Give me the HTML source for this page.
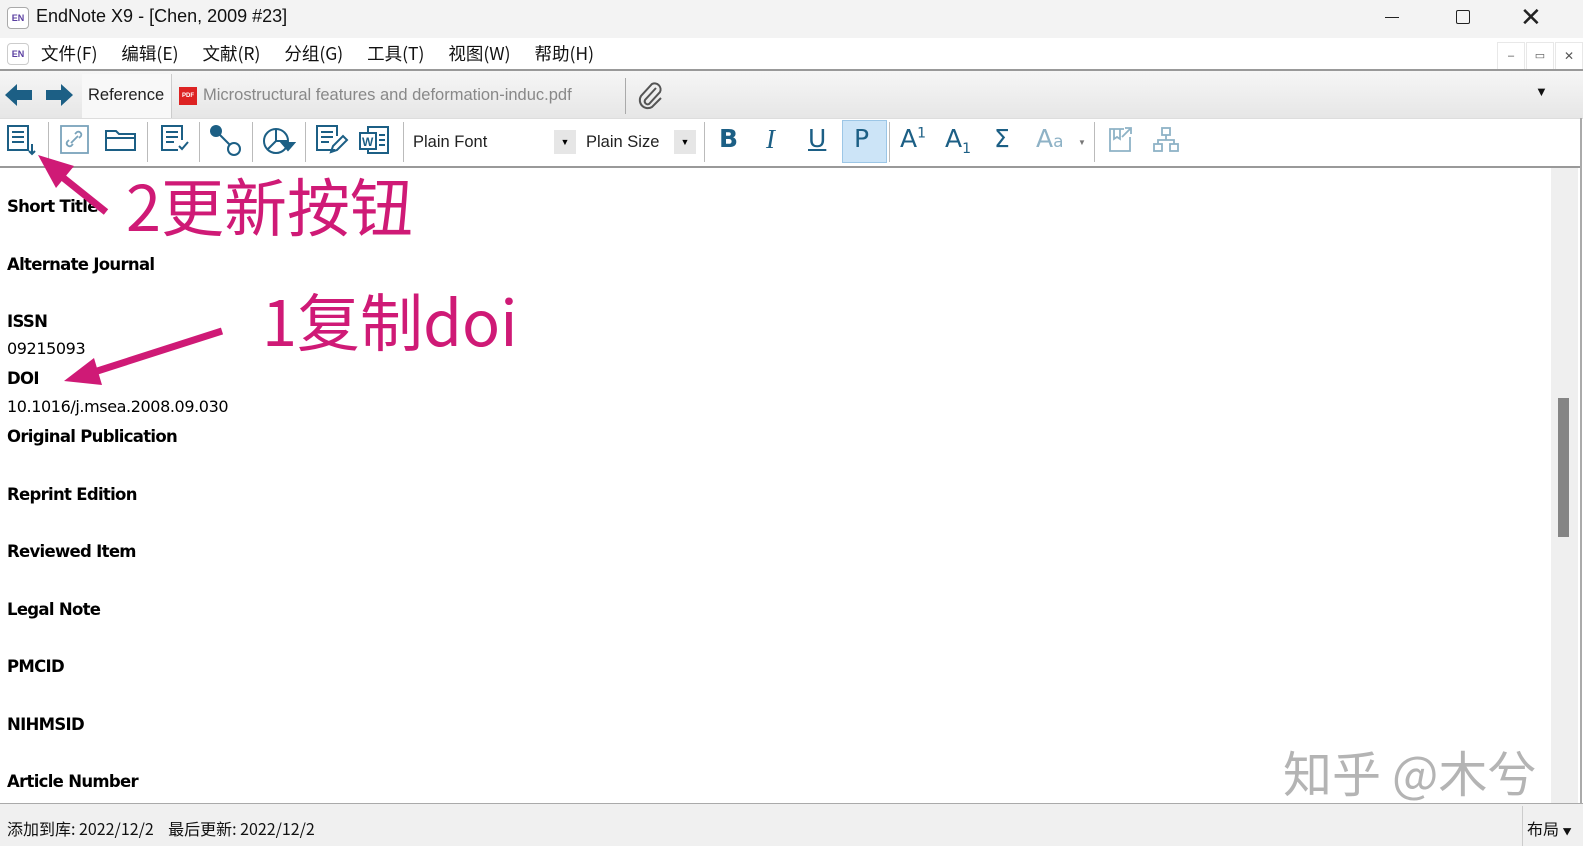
<!DOCTYPE html>
<html><head><meta charset="utf-8"><style>
*{margin:0;padding:0;box-sizing:border-box}
body{width:1583px;height:846px;overflow:hidden;background:#fff;font-family:"Liberation Sans","Noto Sans CJK SC",sans-serif;position:relative;color:#000}
.abs{position:absolute}
.cjk{font-family:"Noto Sans CJK SC","Liberation Sans",sans-serif}
.fl{position:absolute;left:7px;font-size:16.5px;font-weight:bold;font-family:"DejaVu Sans","Liberation Sans",sans-serif;letter-spacing:-0.7px}
.fv{position:absolute;left:7px;font-size:16px;font-family:"DejaVu Sans","Liberation Sans",sans-serif;letter-spacing:-0.4px}
.sep{position:absolute;top:122px;width:1px;height:40px;background:#bbb}
.tb{position:absolute;top:124px;font-size:25px;color:#1c5f85;font-family:"DejaVu Sans",sans-serif}
</style></head><body>
<!-- title bar -->
<div class="abs" style="left:0;top:0;width:1583px;height:38px;background:#f3f3f3"></div>
<div class="abs" style="left:7px;top:7px;width:22px;height:22px;border:1px solid #aaa;border-radius:4px;background:#fff;font-size:9px;font-weight:bold;color:#5a3ea0;text-align:center;line-height:20px">EN</div>
<div class="abs" style="left:36px;top:6px;font-size:18px;color:#111">EndNote X9 - [Chen, 2009 #23]</div>
<div class="abs" style="left:1385px;top:17px;width:14px;height:1px;background:#222"></div>
<div class="abs" style="left:1456px;top:10px;width:14px;height:14px;border:1.5px solid #222;border-radius:2px"></div>
<div class="abs" style="left:1520px;top:2px;font-size:26px;color:#222;font-weight:300">✕</div>
<!-- menu bar -->
<div class="abs" style="left:7px;top:43px;width:22px;height:22px;border:1px solid #ccc;border-radius:4px;background:#fff;font-size:9px;font-weight:bold;color:#5a3ea0;text-align:center;line-height:20px">EN</div>
<div class="abs cjk" style="left:41px;top:41px;font-size:17.5px;color:#111;word-spacing:20px">文件(F) 编辑(E) 文献(R) 分组(G) 工具(T) 视图(W) 帮助(H)</div>
<div class="abs" style="left:1497px;top:42px;width:28px;height:28px;border:1px solid #e8e8e8;font-size:11px;text-align:center;line-height:26px;color:#555">–</div>
<div class="abs" style="left:1526px;top:42px;width:28px;height:28px;border:1px solid #e8e8e8;font-size:11px;text-align:center;line-height:26px;color:#555">▭</div>
<div class="abs" style="left:1555px;top:42px;width:28px;height:28px;border:1px solid #e8e8e8;font-size:12px;text-align:center;line-height:26px;color:#555">✕</div>
<div class="abs" style="left:0;top:69px;width:1583px;height:2px;background:#999"></div>
<!-- tab bar -->
<div class="abs" style="left:0;top:71px;width:1583px;height:47px;background:linear-gradient(#f6f6f6,#e6e6e6)"></div>
<svg class="abs" style="left:4px;top:82px" width="70" height="26"><path d="M1 13 L13 2 V8 H28 V18 H13 V24 Z" fill="#1c5f85"/><path d="M69 13 L57 2 V8 H42 V18 H57 V24 Z" fill="#1c5f85"/></svg>
<div class="abs" style="left:82px;top:74px;width:90px;height:44px;background:#f8f8f8;border-right:1px solid #ccc"></div>
<div class="abs" style="left:88px;top:86px;font-size:16.5px;color:#222">Reference</div>
<div class="abs" style="left:179px;top:87px;width:18px;height:18px;background:#d22;color:#fff;font-size:6px;font-weight:bold;text-align:center;line-height:18px">PDF</div>
<div class="abs" style="left:203px;top:86px;font-size:16.5px;color:#888">Microstructural features and deformation-induc.pdf</div>
<div class="abs" style="left:625px;top:78px;width:1px;height:36px;background:#aaa"></div>
<svg class="abs" style="left:636px;top:80px" width="28" height="30" fill="none" stroke="#555" stroke-width="2"><path d="M20 8 L9 20 a3 3 0 0 0 4 4 L24 12 a6 6 0 0 0 -8 -8 L5 16 a8 8 0 0 0 11 11 L25 18"/></svg>
<div class="abs" style="left:1535px;top:84px;font-size:13px;color:#111">▼</div>
<div class="abs" style="left:0;top:118px;width:1583px;height:1px;background:#ddd"></div>
<!-- toolbar -->
<svg class="abs" style="left:6px;top:124px" width="32" height="34" fill="none" stroke="#1c5f85" stroke-width="2"><rect x="2" y="2" width="20" height="24"/><path d="M6 8h12M6 13h12M6 18h12"/><path d="M26 20v10M23 27l3 3 3-3"/></svg>
<div class="sep" style="left:48px"></div>
<svg class="abs" style="left:60px;top:125px" width="30" height="30" fill="none" stroke="#7aa3bb" stroke-width="1.8"><rect x="1" y="1" width="27" height="27"/><path d="M11 18l7-7M9 15l-2 2a3 3 0 004 4l2-2M19 13l2-2a3 3 0 00-4-4l-2 2"/></svg>
<svg class="abs" style="left:104px;top:127px" width="34" height="26" fill="none" stroke="#1c5f85" stroke-width="2"><path d="M2 4h10l3 3h16v16H2z M2 11h29"/></svg>
<div class="sep" style="left:147px"></div>
<svg class="abs" style="left:160px;top:124px" width="30" height="32" fill="none" stroke="#1c5f85" stroke-width="2"><path d="M18 26H2V2h20v14"/><path d="M6 8h12M6 13h12M6 18h8"/><path d="M19 22l3 3 6-7"/></svg>
<div class="sep" style="left:199px"></div>
<svg class="abs" style="left:208px;top:123px" width="36" height="34"><circle cx="8" cy="8" r="6" fill="#1c5f85"/><path d="M12 12l10 10" stroke="#1c5f85" stroke-width="2"/><circle cx="26" cy="26" r="6" fill="none" stroke="#1c5f85" stroke-width="2"/></svg>
<div class="sep" style="left:252px"></div>
<svg class="abs" style="left:262px;top:125px" width="34" height="32" fill="none" stroke="#1c5f85" stroke-width="2"><circle cx="14" cy="16" r="12"/><path d="M14 4v12h12M14 16l-8 8"/><path d="M20 18h12l-6 7z" fill="#1c5f85"/></svg>
<div class="sep" style="left:305px"></div>
<svg class="abs" style="left:315px;top:124px" width="34" height="32" fill="none" stroke="#1c5f85" stroke-width="2"><path d="M20 26H2V2h20v10"/><path d="M6 8h12M6 13h12M6 18h8"/><path d="M16 28l2-6 10-10 4 4-10 10z"/></svg>
<svg class="abs" style="left:358px;top:125px" width="34" height="32" fill="none" stroke="#1c5f85" stroke-width="2"><rect x="10" y="2" width="20" height="26"/><rect x="2" y="8" width="16" height="16" fill="#fff"/><text x="4" y="21" font-size="12" font-weight="bold" fill="#1c5f85" stroke="none" font-family="Liberation Sans">W</text><path d="M21 10h6M21 15h6M21 20h6"/></svg>
<div class="sep" style="left:403px"></div>
<div class="abs" style="left:413px;top:133px;font-size:16.5px;color:#222">Plain Font</div>
<div class="abs" style="left:554px;top:130px;width:22px;height:24px;background:#e6e6e6;font-size:9px;text-align:center;line-height:24px">▼</div>
<div class="abs" style="left:586px;top:133px;font-size:16.5px;color:#222">Plain Size</div>
<div class="abs" style="left:674px;top:130px;width:22px;height:24px;background:#e6e6e6;font-size:9px;text-align:center;line-height:24px">▼</div>
<div class="sep" style="left:704px"></div>
<div class="tb" style="left:719px;font-weight:bold">B</div>
<div class="tb" style="left:766px;font-style:italic;font-family:'Liberation Serif',serif;font-size:27px">I</div>
<div class="tb" style="left:808px;text-decoration:underline">U</div>
<div class="abs" style="left:842px;top:120px;width:45px;height:43px;background:#cce4f7;border:1px solid #9cc6e6"></div>
<div class="tb" style="left:854px">P</div>
<div class="sep" style="left:889px"></div>
<div class="tb" style="left:900px">A<sup style="font-size:14px">1</sup></div>
<div class="tb" style="left:945px">A<sub style="font-size:14px">1</sub></div>
<div class="tb" style="left:994px">Σ</div>
<div class="tb" style="left:1036px;color:#8eb2c6">A<span style="font-size:17px">a</span></div>
<div class="abs" style="left:1078px;top:138px;font-size:8px;color:#777">▼</div>
<div class="sep" style="left:1094px"></div>
<svg class="abs" style="left:1108px;top:127px" width="26" height="26" fill="none" stroke="#8eb2c6" stroke-width="1.8"><path d="M16 2H2v22h20V10M6 2v10l3-2 3 2V2M14 10l9-9M17 1h6v6"/></svg>
<svg class="abs" style="left:1153px;top:127px" width="26" height="26" fill="none" stroke="#8eb2c6" stroke-width="1.8"><rect x="9" y="1" width="8" height="7"/><rect x="1" y="17" width="8" height="7"/><rect x="17" y="17" width="8" height="7"/><path d="M13 8v5M5 17v-4h16v4"/></svg>
<!-- content frame -->
<div class="abs" style="left:0;top:166px;width:1581px;height:2px;background:#999"></div>
<div class="abs" style="left:1580px;top:118px;width:2px;height:687px;background:#aaa"></div>
<div class="abs" style="left:1551px;top:168px;width:27px;height:636px;background:#efefef"></div>
<div class="abs" style="left:1558px;top:398px;width:11px;height:139px;background:#858585"></div>
<div class="abs" style="left:0;top:803px;width:1583px;height:1px;background:#aaa"></div>
<!-- fields -->
<div class="fl" style="top:197px">Short Title</div>
<div class="fl" style="top:255px">Alternate Journal</div>
<div class="fl" style="top:312px">ISSN</div>
<div class="fv" style="top:339px">09215093</div>
<div class="fl" style="top:369px">DOI</div>
<div class="fv" style="top:397px">10.1016/j.msea.2008.09.030</div>
<div class="fl" style="top:427px">Original Publication</div>
<div class="fl" style="top:485px">Reprint Edition</div>
<div class="fl" style="top:542px">Reviewed Item</div>
<div class="fl" style="top:600px">Legal Note</div>
<div class="fl" style="top:657px">PMCID</div>
<div class="fl" style="top:715px">NIHMSID</div>
<div class="fl" style="top:772px">Article Number</div>
<!-- annotations -->
<svg class="abs" style="left:0;top:0" width="260" height="400"><path d="M106 212 L56 172" stroke="#cf1a76" stroke-width="7"/><path d="M38 155 L74 166 L56 188 Z" fill="#cf1a76"/><path d="M222 331 L88 374" stroke="#cf1a76" stroke-width="7"/><path d="M64 381 L94 358 L102 385 Z" fill="#cf1a76"/></svg>
<div class="abs cjk" style="left:126px;top:166px;font-size:63px;color:#cf1a76;line-height:78px">2更新按钮</div>
<div class="abs cjk" style="left:262px;top:281px;font-size:63px;color:#cf1a76;line-height:78px">1复制doi</div>
<div class="abs cjk" style="left:1283px;top:740px;font-size:49px;color:#b4b4b4;line-height:64px">知乎 @木兮</div>
<!-- status bar -->
<div class="abs" style="left:0;top:804px;width:1583px;height:42px;background:#f0f0f0"></div>
<div class="abs cjk" style="left:7px;top:816px;font-size:16px;color:#111">添加到库: 2022/12/2 &nbsp;&nbsp;&nbsp;最后更新: 2022/12/2</div>
<div class="abs" style="left:1522px;top:806px;width:1px;height:40px;background:#ccc"></div>
<div class="abs cjk" style="left:1527px;top:816px;font-size:16px;color:#111">布局 <span style="font-size:9px">▼</span></div>
</body></html>
